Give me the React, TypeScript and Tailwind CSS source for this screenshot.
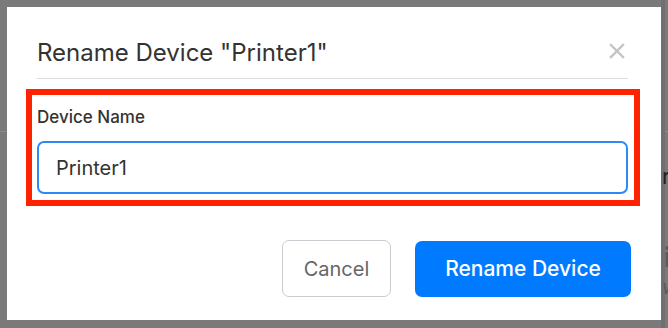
import React, { useState } from 'react';

const CloseIcon = () => (
  <svg width="16" height="16" viewBox="0 0 16 16" fill="none" stroke="#c4c4c4" strokeWidth="2.4" strokeLinecap="square">
    <path d="M2 2L14 14M14 2L2 14" />
  </svg>
);

export default function App() {
  const [name, setName] = useState('Printer1');

  return (
    <div
      className="relative w-[668px] h-[328px] overflow-hidden bg-[#7a7a7a] p-[7px]"
      style={{ fontFamily: 'Inter, "Noto Sans", sans-serif' }}
    >
      {/* dimmed page behind the overlay */}
      <div className="absolute left-0 top-[131px] w-full h-px bg-[#8c8c8c]" />
      <div className="absolute left-[661px] top-0 w-[4px] h-full bg-[#707070]" />
      <span className="absolute left-[662px] top-[160px] text-[22px] text-[#1f1f1f]">r</span>
      <span className="absolute left-[664px] top-[238px] text-[26px] font-bold text-[#5a5a5a]">i</span>
      <span className="absolute left-[662px] top-[272px] text-[20px] italic text-[#5a5a5a]">w</span>

      <div className="relative flex flex-col w-[654px] h-[313px] bg-white pl-[30px] pr-[33px] pt-[30px]">
        <div className="flex items-center justify-between h-[32px] mb-[9px]">
          <h2 className="text-[24px] leading-[32px] text-[#333333]">Rename Device "Printer1"</h2>
          <button className="mr-[3px] mt-[-4px]" aria-label="Close">
            <CloseIcon />
          </button>
        </div>
        <div className="h-px bg-[#dcdcdc]" />

        <div className="mt-[10px] ml-[-11px] mr-[-12px] border-[6px] border-[#ff2200] pl-[5px] pr-[6px] pt-[10px] pb-[6px]">
          <label className="block text-[17px] leading-[24px] font-medium text-[#333333]">Device Name</label>
          <input
            value={name}
            onChange={(e) => setName(e.target.value)}
            className="mt-[12px] w-full h-[53px] px-[17px] rounded-[7px] border-2 border-[#2f89f5] text-[20px] text-[#333333] outline-none"
          />
        </div>

        <div className="flex justify-end gap-[24px] mt-[34px] mr-[-3px]">
          <button className="w-[109px] h-[57px] rounded-[7px] border border-[#c8ccd1] bg-white text-[20px] text-[#666666]">
            Cancel
          </button>
          <button className="w-[216px] h-[56px] mt-px rounded-[7px] bg-[#007bff] text-[21px] font-medium text-white">
            Rename Device
          </button>
        </div>
      </div>
    </div>
  );
}
